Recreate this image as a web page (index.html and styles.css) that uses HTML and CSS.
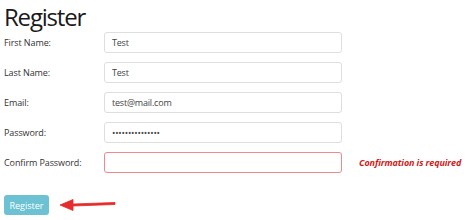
FILE: index.html
```html
<!DOCTYPE html>
<html lang="en">
<head>
	<meta charset="UTF-8">
	<title>Register</title>
	<link rel="stylesheet" href="styles.css">
</head>
<body>
	<div id="box">
		<h1 class="title">Register</h1>
		<form class="form">
			<div class="row">
				<label class="label">First Name:</label>
				<input class="field" type="text" value="Test">
			</div>
			<div class="row">
				<label class="label">Last Name:</label>
				<input class="field" type="text" value="Test">
			</div>
			<div class="row">
				<label class="label">Email:</label>
				<input class="field" type="text" value="test@mail.com">
			</div>
			<div class="row">
				<label class="label">Password:</label>
				<input class="field" type="password" value="secretpassword1">
			</div>
			<div class="row">
				<label class="label">Confirm Password:</label>
				<input class="field invalid" type="password" value="">
				<span class="error">Confirmation is required</span>
			</div>
			<div class="actions">
				<button class="btn" type="button">Register</button>
				<svg class="arrow" width="60" height="20" viewBox="0 0 60 20">
					<path d="M56 7.5 L14 9 L14 4.5 L1 10 L14 15.5 L14 11 L56 9.5 Z" fill="#e52b2b" stroke="#e52b2b" stroke-width="0.8" stroke-linejoin="round"/>
				</svg>
			</div>
		</form>
	</div>
</body>
</html>
```

FILE: styles.css
```css
body {
	margin: 0;
	background: #fff;
	font-family: "Open Sans", "Noto Sans", sans-serif;
	color: #222;
}
#box {
	padding: 0 4px;
}
.title {
	margin: 0 0 -2px;
	font-size: 24px;
	font-weight: 400;
	line-height: 34px;
	letter-spacing: -1.2px;
	color: #1a1a1a;
}
.form {
	display: flex;
	flex-direction: column;
	gap: 9px;
}
.row {
	display: flex;
	align-items: center;
	height: 21px;
}
.label {
	width: 100px;
	font-size: 9px;
	letter-spacing: -0.1px;
	color: #333;
}
.field {
	box-sizing: border-box;
	width: 238px;
	height: 21px;
	margin: 0;
	padding: 0 7px;
	border: 1px solid #dedede;
	border-radius: 3px;
	font-family: inherit;
	font-size: 9px;
	letter-spacing: -0.2px;
	color: #444;
	background: #fff;
}
.field.invalid {
	border-color: #ee8a8e;
}
.error {
	margin-left: 17px;
	font-size: 9px;
	font-weight: 700;
	font-style: italic;
	letter-spacing: -0.1px;
	color: #d01a1a;
}
.actions {
	display: flex;
	align-items: center;
	margin-top: 13px;
}
.btn {
	width: 45px;
	height: 20px;
	padding: 0;
	border: 0;
	border-radius: 3px;
	background: #6cc2d3;
	color: #fff;
	font-family: inherit;
	font-size: 9px;
}
.arrow {
	display: block;
	margin-left: 10px;
}
```
